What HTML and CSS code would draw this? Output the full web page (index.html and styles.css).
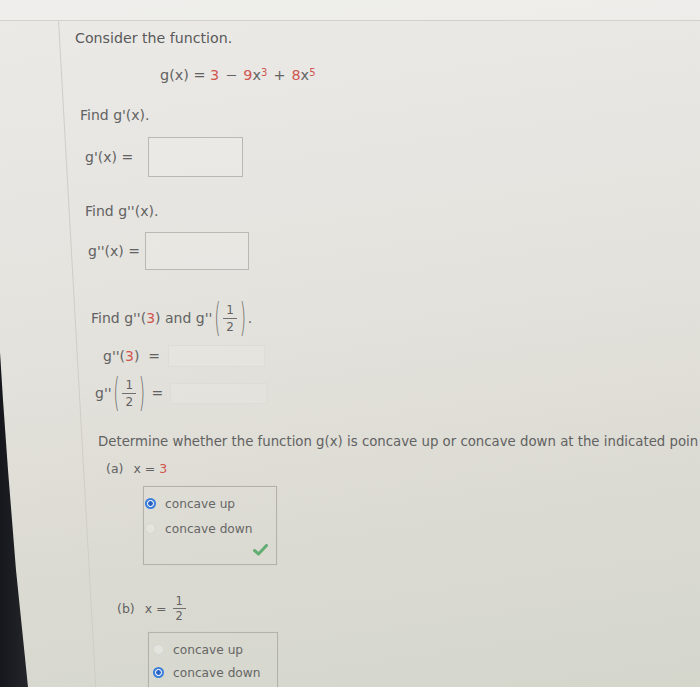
FILE: index.html
```html
<!DOCTYPE html>
<html>
<head>
<meta charset="utf-8">
<title>Concavity</title>
<link rel="stylesheet" href="styles.css">
</head>
<body>
<div class="screen">
  <div class="topband"></div>
  <div class="content">
    <div class="row r-consider">Consider the function.</div>
    <div class="row r-eq">g(x) = <span class="red">&nbsp;3</span><span class="sp">−</span><span class="red">9</span>x<sup class="red">3</sup><span class="sp">+</span><span class="red">8</span>x<sup class="red">5</sup></div>
    <div class="row r-find1">Find g'(x).</div>
    <div class="row r-g1"><span class="lbl">g'(x) =</span><span class="box box-g1"></span></div>
    <div class="row r-find2">Find g''(x).</div>
    <div class="row r-g2"><span class="lbl">g''(x) =</span><span class="box box-g2"></span></div>
    <div class="row r-find3">Find g''(<span class="red">3</span>) and g''<span class="paren">(</span><span class="frac"><span class="num">1</span><span class="den">2</span></span><span class="paren">)</span>.</div>
    <div class="row r-g3"><span class="lbl">g''(<span class="red">3</span>) &nbsp;=</span><span class="box faint box-g3"></span></div>
    <div class="row r-gh"><span class="lbl">g''<span class="paren">(</span><span class="frac"><span class="num">1</span><span class="den">2</span></span><span class="paren">)</span> &nbsp;=</span><span class="box faint box-gh"></span></div>
    <div class="row r-det">Determine whether the function g(x) is concave up or concave down at the indicated poin</div>
    <div class="row r-a small"><span class="tag">(a)</span>x = <span class="red">&nbsp;3</span></div>
    <div class="choice choice-a">
      <div class="opt"><span class="radio on"></span>concave up</div>
      <div class="opt"><span class="radio"></span>concave down</div>
      <div class="check-row">
        <svg class="check" width="15" height="12" viewBox="0 0 15 12"><path d="M1.5 6.5 L5.5 10 L13.5 1.5" fill="none" stroke="#62ad72" stroke-width="3" stroke-linecap="round" stroke-linejoin="round"/></svg>
      </div>
    </div>
    <div class="row r-b small"><span class="tag">(b)</span>x = <span class="frac fsmall"><span class="num">1</span><span class="den">2</span></span></div>
    <div class="choice choice-b">
      <div class="opt"><span class="radio"></span>concave up</div>
      <div class="opt"><span class="radio on"></span>concave down</div>
    </div>
  </div>
</div>
</body>
</html>
```
FILE: styles.css
```css
body {
  margin: 0;
  width: 700px;
  height: 687px;
  overflow: hidden;
  font-family: "DejaVu Sans", Verdana, sans-serif;
  font-size: 14px;
  color: #626262;
  background: linear-gradient(172deg, #ebeae7 0%, #e5e3de 40%, #dcdbd3 72%, #d4d6cc 100%);
}

.screen {
  position: relative;
  height: 687px;
  overflow: hidden;
}

.screen::before {
  content: "";
  position: absolute;
  left: 58px;
  top: 20px;
  width: 1px;
  height: 670px;
  background: #cfcdc7;
  transform-origin: top left;
  transform: skewX(3.2deg);
}

.screen::after {
  content: "";
  position: absolute;
  left: 0;
  top: 0;
  width: 40px;
  height: 687px;
  background: linear-gradient(to right, #15171c, #2a2c31);
  clip-path: polygon(0 352px, 3px 400px, 8px 470px, 16px 570px, 28px 687px, 0 687px);
}

.topband {
  height: 20px;
  border-bottom: 1px solid #d3d1cb;
  background: rgba(255, 255, 255, 0.22);
}

.row {
  display: flex;
  align-items: center;
  white-space: nowrap;
}

.red { color: #d0564f; }
.sp { margin-left: 6px; margin-right: 6px; }

sup {
  font-size: 10px;
  line-height: 0;
  position: relative;
  top: -2px;
  vertical-align: super;
}

.r-consider { height: 20px; margin-top: 7px; padding-left: 75px; color: #5a5a5a; font-size: 14.2px; }
.r-eq { height: 20px; margin-top: 17px; padding-left: 160px; font-size: 14.4px; }
.r-find1 { height: 20px; margin-top: 20px; padding-left: 80px; }
.r-g1 { height: 40px; margin-top: 12px; padding-left: 85px; }
.r-find2 { height: 20px; margin-top: 24px; padding-left: 85px; }
.r-g2 { height: 38px; margin-top: 11px; padding-left: 88px; }
.r-find3 { height: 36px; margin-top: 30px; padding-left: 91px; }
.r-g3 { height: 22px; margin-top: 9px; padding-left: 103px; }
.r-gh { height: 36px; margin-top: 8px; padding-left: 95px; }
.r-det { height: 20px; margin-top: 20px; padding-left: 98px; font-size: 13.3px; }
.r-a { height: 18px; margin-top: 8px; padding-left: 106px; }
.r-b { height: 28px; margin-top: 29px; padding-left: 117px; }

.small { font-size: 12.5px; }
.tag { margin-right: 10px; }

.lbl { display: inline-flex; align-items: center; }

.box {
  display: block;
  box-sizing: border-box;
  border: 1px solid #b9b8b2;
  background: rgba(255, 255, 255, 0.12);
}
.box.faint { border-color: #dddcd6; }
.box-g1 { width: 95px; height: 40px; margin-left: 15px; }
.box-g2 { width: 104px; height: 38px; margin-left: 5px; }
.box-g3 { width: 97px; height: 22px; margin-left: 8px; }
.box-gh { width: 97px; height: 21px; margin-left: 7px; }

.frac {
  display: inline-flex;
  flex-direction: column;
  align-items: center;
  font-size: 12px;
  line-height: 14px;
  margin: 0 1px;
}
.frac .num {
  border-bottom: 1px solid #707070;
  padding: 0 3px 1px;
}
.frac .den { padding-top: 1px; }
.fsmall { font-size: 11.5px; line-height: 12px; margin-left: 6px; }

.paren {
  display: inline-block;
  font-size: 15px;
  font-weight: 300;
  transform: scaleY(2.6);
  margin: 0 2px;
}

.choice {
  box-sizing: border-box;
  border: 1px solid #b2b1ab;
  box-shadow: 0 0 1px rgba(0, 0, 0, 0.08);
  font-size: 12.2px;
  color: #666;
}
.choice-a {
  margin-top: 9px;
  margin-left: 143px;
  width: 134px;
  height: 79px;
  padding: 8px 0 0 1px;
}
.choice-b {
  margin-top: 10px;
  margin-left: 148px;
  width: 130px;
  height: 80px;
  padding: 8px 0 0 4px;
}
.opt {
  display: flex;
  align-items: center;
  height: 17px;
  gap: 9px;
}
.choice-a .opt + .opt { margin-top: 8px; }
.choice-b .opt + .opt { margin-top: 6px; }

.radio {
  width: 11px;
  height: 11px;
  border-radius: 50%;
  box-sizing: border-box;
  border: 1px solid #d6d6d0;
  background: #e4e4df;
  flex: none;
}
.radio.on {
  border: none;
  background: radial-gradient(circle, #2a63c4 0 2px, #dfe8f6 2.6px 3.2px, #3b7ddb 3.8px);
}

.check-row {
  display: flex;
  justify-content: flex-end;
  margin-top: 7px;
  padding-right: 8px;
}
.check { display: block; }
```
